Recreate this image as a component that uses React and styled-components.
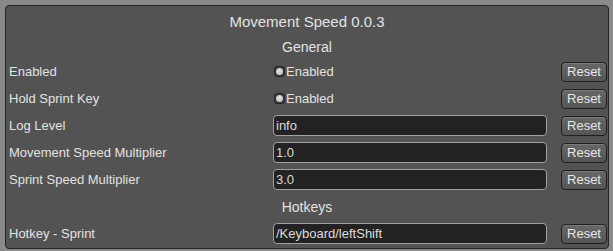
import styled, { createGlobalStyle } from 'styled-components';

const Global = createGlobalStyle`
  html, body {
    margin: 0;
    padding: 0;
    background: #8a8a8a;
    font-family: "Liberation Sans", Arial, sans-serif;
  }
`;

const settings = {
  general: [
    { label: 'Enabled', type: 'toggle', value: 'Enabled' },
    { label: 'Hold Sprint Key', type: 'toggle', value: 'Enabled' },
    { label: 'Log Level', type: 'text', value: 'info' },
    { label: 'Movement Speed Multiplier', type: 'text', value: '1.0' },
    { label: 'Sprint Speed Multiplier', type: 'text', value: '3.0' },
  ],
  hotkeys: [{ label: 'Hotkey - Sprint', type: 'text', value: '/Keyboard/leftShift' }],
};

export default function App() {
  return (
    <>
      <Global />
      <Page>
        <Panel>
          <Title>Movement Speed 0.0.3</Title>
          <SectionHeader>General</SectionHeader>
          {settings.general.map((s) => (
            <SettingRow key={s.label} setting={s} />
          ))}
          <SectionHeader tall>Hotkeys</SectionHeader>
          {settings.hotkeys.map((s) => (
            <SettingRow key={s.label} setting={s} />
          ))}
        </Panel>
      </Page>
    </>
  );
}

function SettingRow({ setting }) {
  return (
    <Row>
      <Label>{setting.label}</Label>
      {setting.type === 'toggle' ? (
        <Toggle>
          <Check />
          {setting.value}
        </Toggle>
      ) : (
        <Field>{setting.value}</Field>
      )}
      <ResetButton>Reset</ResetButton>
    </Row>
  );
}

const Page = styled.div`
  width: 613px;
  height: 251px;
  padding: 5px 5px 0 5px;
  box-sizing: border-box;
`;

const Panel = styled.div`
  width: 604px;
  height: 244px;
  box-sizing: border-box;
  background: #535353;
  border: 1px solid #262626;
  border-radius: 4px;
  padding: 0 0 0 3px;
  color: #e2e2e2;
  font-size: 13px;
`;

const Title = styled.div`
  height: 30px;
  display: flex;
  align-items: center;
  justify-content: center;
  font-size: 15px;
  padding-right: 3px;
`;

const SectionHeader = styled.div`
  height: ${(p) => (p.tall ? '27px' : '22px')};
  display: flex;
  align-items: center;
  justify-content: center;
  font-size: 14px;
  padding-right: 3px;
`;

const Row = styled.div`
  height: 27px;
  display: grid;
  grid-template-columns: 264px 274px 46px;
  align-items: center;
`;

const Label = styled.div`
  white-space: nowrap;
`;

const Toggle = styled.div`
  display: flex;
  align-items: center;
  gap: 1px;
  padding-left: 1px;
`;

const Check = styled.span`
  flex-shrink: 0;
  display: block;
  width: 11px;
  height: 11px;
  box-sizing: border-box;
  border-radius: 3px;
  border: 1px solid #262626;
  background: #3a3a3a;
  position: relative;

  &::after {
    content: '';
    position: absolute;
    left: 1px;
    top: 1px;
    width: 7px;
    height: 7px;
    border-radius: 50%;
    background: radial-gradient(circle at 45% 40%, #e4e4e4, #b4b4b4);
  }
`;

const Field = styled.div`
  height: 21px;
  box-sizing: border-box;
  background: #222222;
  border: 1px solid #a0a0a0;
  border-radius: 4px;
  padding: 0 2px;
  display: flex;
  align-items: center;
  color: #dcdcdc;
  white-space: nowrap;
  overflow: hidden;
`;

const ResetButton = styled.div`
  margin-left: 14px;
  width: 46px;
  height: 20px;
  box-sizing: border-box;
  border: 1px solid #202020;
  border-radius: 4px;
  background: linear-gradient(#676767, #555555);
  box-shadow: inset 0 1px 0 #7a7a7a;
  display: flex;
  align-items: center;
  justify-content: center;
  color: #e6e6e6;
`;
